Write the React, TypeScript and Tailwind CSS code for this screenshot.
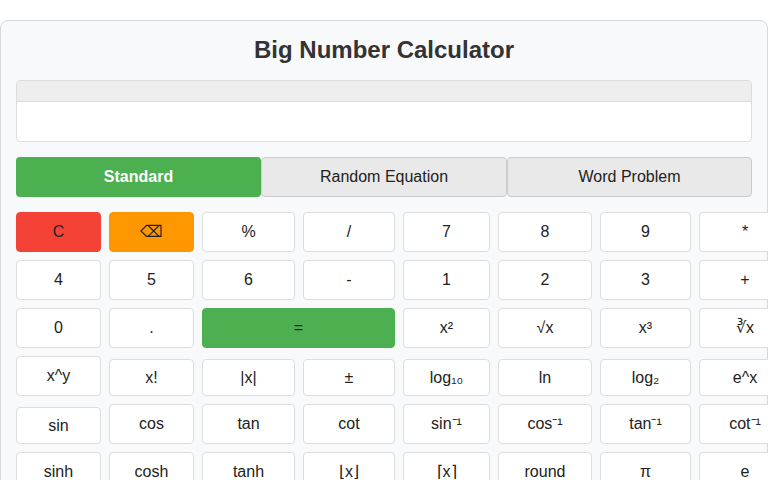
import React from "react";

type B = { t: string; cls?: string; span?: boolean };
const rows: B[][] = [
  [{ t: "C", cls: "bg-[#f44336] border-[#f44336]" }, { t: "⌫", cls: "bg-[#ff9800] border-[#ff9800] text-[11px]" }, { t: "%" }, { t: "/" }, { t: "7" }, { t: "8" }, { t: "9" }, { t: "*" }],
  [{ t: "4" }, { t: "5" }, { t: "6" }, { t: "-" }, { t: "1" }, { t: "2" }, { t: "3" }, { t: "+" }],
  [{ t: "0" }, { t: "." }, { t: "=", span: true, cls: "bg-[#4caf50] border-[#4caf50]" }, { t: "x²" }, { t: "√x" }, { t: "x³" }, { t: "∛x" }],
  [{ t: "x^y" }, { t: "x!" }, { t: "|x|" }, { t: "±" }, { t: "log₁₀" }, { t: "ln" }, { t: "log₂" }, { t: "e^x" }],
  [{ t: "sin" }, { t: "cos" }, { t: "tan" }, { t: "cot" }, { t: "sin⁻¹" }, { t: "cos⁻¹" }, { t: "tan⁻¹" }, { t: "cot⁻¹" }],
  [{ t: "sinh" }, { t: "cosh" }, { t: "tanh" }, { t: "⌊x⌋" }, { t: "⌈x⌉" }, { t: "round" }, { t: "π" }, { t: "e" }],
];

export default function App() {
  return (
    <div className="w-[768px] h-[480px] overflow-hidden bg-white pt-5" style={{ fontFamily: '"Liberation Sans", Arial, sans-serif' }}>
      <div className="w-[768px] border border-[#d6d8db] rounded-lg bg-[#f8f9fa] px-[15px] pt-[13px] pb-4">
        <h1 className="text-center text-[24px] font-bold text-[#333] leading-[32px]">Big Number Calculator</h1>
        <div className="mt-[14px] border border-[#ddd] rounded bg-white h-[62px] overflow-hidden">
          <div className="h-[21px] bg-[#eeeeee] border-b border-[#ddd]"></div>
        </div>
        <div className="mt-[15px] flex">
          <div className="w-[245px] h-10 rounded bg-[#4caf50] text-white font-bold flex items-center justify-center">Standard</div>
          <div className="w-[246px] h-10 rounded border border-[#ccc] bg-[#e9e9e9] text-[#222] flex items-center justify-center">Random Equation</div>
          <div className="w-[245px] h-10 rounded border border-[#ccc] bg-[#e9e9e9] text-[#222] flex items-center justify-center">Word Problem</div>
        </div>
        <div className="mt-[15px] grid grid-cols-[85px_85px_93px_92px_87px_94px_91px_92px] gap-x-2 gap-y-2 w-[800px] auto-rows-[40px]">
          {rows.flat().map((b, i) => (
            <div
              key={i}
              className={`rounded border flex items-center justify-center text-[16px] text-[#222] ${b.span ? "col-span-2" : ""} ${b.cls ?? "bg-white border-[#ddd]"} ${i >= 24 && i < 32 ? "mt-[3px]" : ""}`}
            >
              {b.t}
            </div>
          ))}
        </div>
      </div>
    </div>
  );
}
